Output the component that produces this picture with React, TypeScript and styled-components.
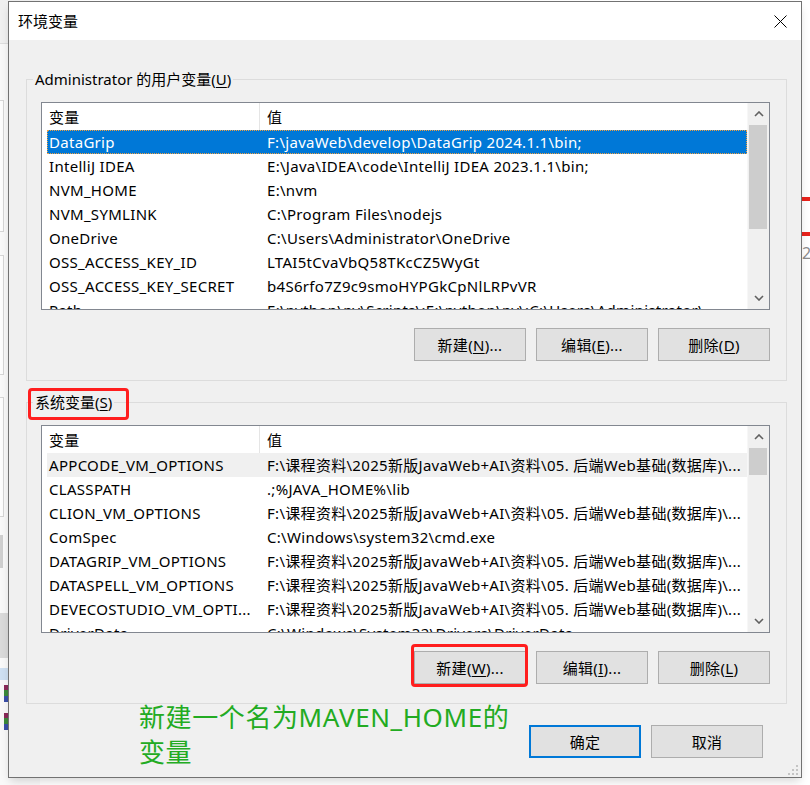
import React from 'react';
import styled, { createGlobalStyle } from 'styled-components';

const Global = createGlobalStyle`
  html, body { margin: 0; padding: 0; background: #ffffff; overflow: hidden; }
  body { font-family: "Noto Sans", "Noto Sans CJK SC", sans-serif; color: #000; }
  * { box-sizing: border-box; }
`;

const FONT = `"Noto Sans", "Noto Sans CJK SC", sans-serif`;

/* ---------- desktop behind the dialog ---------- */
const Desktop = styled.div`
  position: relative;
  width: 810px;
  height: 785px;
  background: #ffffff;
  overflow: hidden;
`;

const BackWindow = styled.div`
  position: absolute;
  left: 0;
  top: 0;
  width: 40px;
  height: 785px;
  background: #f9f9f9;
`;

const BackTopBar = styled.div`
  position: absolute;
  left: 0;
  top: 0;
  width: 40px;
  height: 44px;
  background: #f0f0f0;
  border-bottom: 1px solid #dedede;
`;

const BackPanel = styled.div<{ $top: number; $h: number }>`
  position: absolute;
  left: -20px;
  width: 24px;
  top: ${p => p.$top}px;
  height: ${p => p.$h}px;
  border: 1px solid #d6d6d6;
  background: #fdfdfd;
`;

const BackBlock = styled.div<{ $top: number; $h: number; $c: string; $w: number }>`
  position: absolute;
  left: 0;
  width: ${p => p.$w}px;
  top: ${p => p.$top}px;
  height: ${p => p.$h}px;
  background: ${p => p.$c};
`;

const BackIcon = styled.div<{ $top: number }>`
  position: absolute;
  left: 4px;
  top: ${p => p.$top}px;
  width: 10px;
  height: 17px;
  background: linear-gradient(#8a2a5a 0 30%, #3b8a3b 30% 65%, #3b4fa8 65% 100%);
`;

const RedStroke = styled.div<{ $top: number }>`
  position: absolute;
  left: 780px;
  width: 40px;
  top: ${p => p.$top}px;
  height: 4px;
  background: #e8231c;
`;

const BackText = styled.div`
  position: absolute;
  left: 802px;
  top: 243px;
  font-family: ${FONT};
  font-size: 16px;
  color: #8c8c8c;
  line-height: 20px;
`;

/* ---------- dialog ---------- */
const Dialog = styled.div`
  position: absolute;
  left: 8px;
  top: 1px;
  width: 794px;
  height: 777px;
  border: 1px solid #727272;
  background: #f0f0f0;
  display: flex;
  flex-direction: column;
  box-shadow: 0 5px 9px -2px rgba(0, 0, 0, 0.16);
  font-family: ${FONT};
  font-size: 15px;
`;

const TitleBar = styled.div`
  height: 38px;
  background: #ffffff;
  display: flex;
  align-items: center;
  justify-content: space-between;
  padding-left: 9px;
  flex-shrink: 0;
`;

const Title = styled.div`
  font-size: 15px;
  line-height: 20px;
  color: #000;
`;

const CloseButton = styled.div`
  width: 41px;
  height: 38px;
  display: flex;
  align-items: center;
  justify-content: center;
`;

const Body = styled.div`
  flex: 1;
  padding: 29px 14px 0 17px;
  display: flex;
  flex-direction: column;
  position: relative;
`;

const Group = styled.fieldset<{ $gap?: number }>`
  margin: ${p => p.$gap ?? 0}px 0 0 0;
  padding: 0;
  border: 1px solid #dcdcdc;
  min-width: 0;
`;

const GroupContent = styled.div`
  padding: 12px 16px 19px 14px;
`;

const Legend = styled.legend`
  margin-left: 6px;
  padding: 0 2px;
  font-size: 15px;
  line-height: 21px;
  color: #000;
`;

const Marked = styled.span`
  position: relative;
  display: inline-block;
  &::after {
    content: '';
    position: absolute;
    left: -7px;
    right: -17px;
    top: -4px;
    bottom: -7px;
    border: 3px solid #ff1e1e;
    border-radius: 4px;
  }
`;

const Key = styled.span`
  text-decoration: underline;
  text-underline-offset: 2px;
  text-decoration-thickness: 1px;
`;

const ListView = styled.div`
  height: 208px;
  border: 1px solid #828790;
  background: #ffffff;
  display: flex;
  overflow: hidden;
  letter-spacing: 0.3px;
`;

const ListBody = styled.div`
  flex: 1;
  min-width: 0;
  overflow: hidden;
`;

const Header = styled.div`
  display: grid;
  grid-template-columns: 218px 1fr;
  height: 27px;
`;

const HeaderCell = styled.div<{ $sep?: boolean }>`
  padding-left: 7px;
  padding-top: 2px;
  line-height: 24px;
  white-space: nowrap;
  border-right: ${p => (p.$sep ? '1px solid #e5e5e5' : 'none')};
`;

const Row = styled.div<{ $state?: 'selected' | 'hover' }>`
  display: grid;
  grid-template-columns: 212px 1fr;
  height: 24px;
  line-height: 24px;
  margin-left: 5px;
  white-space: nowrap;
  background: ${p =>
    p.$state === 'selected' ? '#0078d7' : p.$state === 'hover' ? '#f0f0f0' : 'transparent'};
  color: ${p => (p.$state === 'selected' ? '#ffffff' : '#000000')};
  outline: ${p => (p.$state === 'selected' ? '1px dotted #f0a040' : 'none')};
  outline-offset: -1px;
`;

const NameCell = styled.div`
  padding-left: 2px;
  overflow: hidden;
`;

const ValueCell = styled.div`
  padding-left: 8px;
  overflow: hidden;
`;

const ScrollBar = styled.div`
  width: 22px;
  flex-shrink: 0;
  background: #f0f0f0;
  display: flex;
  flex-direction: column;
  border-left: 1px solid #f7f7f7;
`;

const ArrowBox = styled.div`
  height: 22px;
  display: flex;
  align-items: center;
  justify-content: center;
  flex-shrink: 0;
`;

const Track = styled.div`
  flex: 1;
  position: relative;
`;

const Thumb = styled.div<{ $top: number; $h: number }>`
  position: absolute;
  left: 1px;
  right: 2px;
  top: ${p => p.$top}px;
  height: ${p => p.$h}px;
  background: #cdcdcd;
`;

const ButtonRow = styled.div<{ $top: number; $gap: number }>`
  display: flex;
  justify-content: flex-end;
  gap: ${p => p.$gap}px;
  margin-top: ${p => p.$top}px;
`;

const Button = styled.div<{ $default?: boolean; $marked?: boolean }>`
  position: relative;
  width: 112px;
  height: 33px;
  background: #e1e1e1;
  border: ${p => (p.$default ? '2px solid #0078d7' : '1px solid #adadad')};
  display: flex;
  align-items: center;
  justify-content: center;
  font-size: 15px;
  line-height: 20px;
  letter-spacing: 0.3px;
  color: #000;
  white-space: nowrap;
  &::after {
    content: '';
    display: ${p => (p.$marked ? 'block' : 'none')};
    position: absolute;
    left: -4px;
    right: -3px;
    top: -8px;
    bottom: -4px;
    border: 3px solid #ff1e1e;
    border-radius: 4px;
  }
`;

const Footer = styled.div`
  position: relative;
  display: flex;
  justify-content: flex-end;
  gap: 10px;
  padding: 21px 24px 0 0;
`;

const Annotation = styled.div`
  position: absolute;
  left: 113px;
  top: -4px;
  font-size: 26px;
  line-height: 35px;
  letter-spacing: 0.6px;
  color: #22ab22;
  white-space: nowrap;
`;

const Grip = styled.svg`
  position: absolute;
  right: 2px;
  bottom: 1px;
`;

/* ---------- data ---------- */
type Item = { name: string; value: string; state?: 'selected' | 'hover' };

const userVars: Item[] = [
  { name: 'DataGrip', value: 'F:\\javaWeb\\develop\\DataGrip 2024.1.1\\bin;', state: 'selected' },
  { name: 'IntelliJ IDEA', value: 'E:\\Java\\IDEA\\code\\IntelliJ IDEA 2023.1.1\\bin;' },
  { name: 'NVM_HOME', value: 'E:\\nvm' },
  { name: 'NVM_SYMLINK', value: 'C:\\Program Files\\nodejs' },
  { name: 'OneDrive', value: 'C:\\Users\\Administrator\\OneDrive' },
  { name: 'OSS_ACCESS_KEY_ID', value: 'LTAI5tCvaVbQ58TKcCZ5WyGt' },
  { name: 'OSS_ACCESS_KEY_SECRET', value: 'b4S6rfo7Z9c9smoHYPGkCpNlLRPvVR' },
  { name: 'Path', value: 'E:\\python\\py\\Scripts\\;E:\\python\\py\\;C:\\Users\\Administrator\\...' },
];

const longVal = 'F:\\课程资料\\2025新版JavaWeb+AI\\资料\\05. 后端Web基础(数据库)\\...';

const sysVars: Item[] = [
  { name: 'APPCODE_VM_OPTIONS', value: longVal, state: 'hover' },
  { name: 'CLASSPATH', value: '.;%JAVA_HOME%\\lib' },
  { name: 'CLION_VM_OPTIONS', value: longVal },
  { name: 'ComSpec', value: 'C:\\Windows\\system32\\cmd.exe' },
  { name: 'DATAGRIP_VM_OPTIONS', value: longVal },
  { name: 'DATASPELL_VM_OPTIONS', value: longVal },
  { name: 'DEVECOSTUDIO_VM_OPTI...', value: longVal },
  { name: 'DriverData', value: 'C:\\Windows\\System32\\Drivers\\DriverData' },
];

const Chevron = ({ down }: { down?: boolean }) => (
  <svg width="10" height="6" viewBox="0 0 10 6">
    <polyline
      points={down ? '1,1 5,5 9,1' : '1,5 5,1 9,5'}
      fill="none"
      stroke="#606060"
      strokeWidth="1.6"
    />
  </svg>
);

const List = ({ items, thumbH }: { items: Item[]; thumbH: number }) => (
  <ListView>
    <ListBody>
      <Header>
        <HeaderCell $sep>变量</HeaderCell>
        <HeaderCell>值</HeaderCell>
      </Header>
      {items.map(it => (
        <Row key={it.name} $state={it.state}>
          <NameCell>{it.name}</NameCell>
          <ValueCell>{it.value}</ValueCell>
        </Row>
      ))}
    </ListBody>
    <ScrollBar>
      <ArrowBox>
        <Chevron />
      </ArrowBox>
      <Track>
        <Thumb $top={0} $h={thumbH} />
      </Track>
      <ArrowBox>
        <Chevron down />
      </ArrowBox>
    </ScrollBar>
  </ListView>
);

export default function App() {
  return (
    <Desktop>
      <Global />
      <BackWindow>
        <BackTopBar />
        <BackPanel $top={100} $h={132} />
        <BackPanel $top={255} $h={120} />
        <BackPanel $top={397} $h={120} />
        <BackBlock $top={535} $h={33} $w={3} $c="#cfcfcf" />
        <BackBlock $top={613} $h={45} $w={40} $c="#dadada" />
        <BackBlock $top={668} $h={12} $w={14} $c="#cfe0f2" />
        <BackIcon $top={685} />
        <BackIcon $top={713} />
      </BackWindow>
      <RedStroke $top={197} />
      <RedStroke $top={232} />
      <BackText>23</BackText>

      <Dialog>
        <TitleBar>
          <Title>环境变量</Title>
          <CloseButton>
            <svg width="13" height="13" viewBox="0 0 13 13">
              <path d="M0.5 0.5 L12.5 12.5 M12.5 0.5 L0.5 12.5" stroke="#000" strokeWidth="1" />
            </svg>
          </CloseButton>
        </TitleBar>

        <Body>
          <Group>
            <Legend>
              Administrator 的用户变量(<Key>U</Key>)
            </Legend>
            <GroupContent>
              <List items={userVars} thumbH={104} />
              <ButtonRow $top={18} $gap={10}>
                <Button>
                  新建(<Key>N</Key>)...
                </Button>
                <Button>
                  编辑(<Key>E</Key>)...
                </Button>
                <Button>
                  删除(<Key>D</Key>)
                </Button>
              </ButtonRow>
            </GroupContent>
          </Group>

          <Group $gap={11}>
            <Legend>
              <Marked>
                系统变量(<Key>S</Key>)
              </Marked>
            </Legend>
            <GroupContent>
              <List items={sysVars} thumbH={27} />
              <ButtonRow $top={18} $gap={10}>
                <Button $marked>
                  新建(<Key>W</Key>)...
                </Button>
                <Button>
                  编辑(<Key>I</Key>)...
                </Button>
                <Button>
                  删除(<Key>L</Key>)
                </Button>
              </ButtonRow>
            </GroupContent>
          </Group>

          <Footer>
            <Annotation>
              新建一个名为MAVEN_HOME的
              <br />
              变量
            </Annotation>
            <Button $default>确定</Button>
            <Button>取消</Button>
          </Footer>

          <Grip width="12" height="12" viewBox="0 0 12 12">
            <rect x="9" y="1" width="2" height="2" fill="#c4c4c4" />
            <rect x="5" y="5" width="2" height="2" fill="#c4c4c4" />
            <rect x="9" y="5" width="2" height="2" fill="#c4c4c4" />
            <rect x="1" y="9" width="2" height="2" fill="#c4c4c4" />
            <rect x="5" y="9" width="2" height="2" fill="#c4c4c4" />
            <rect x="9" y="9" width="2" height="2" fill="#c4c4c4" />
          </Grip>
        </Body>
      </Dialog>
    </Desktop>
  );
}
